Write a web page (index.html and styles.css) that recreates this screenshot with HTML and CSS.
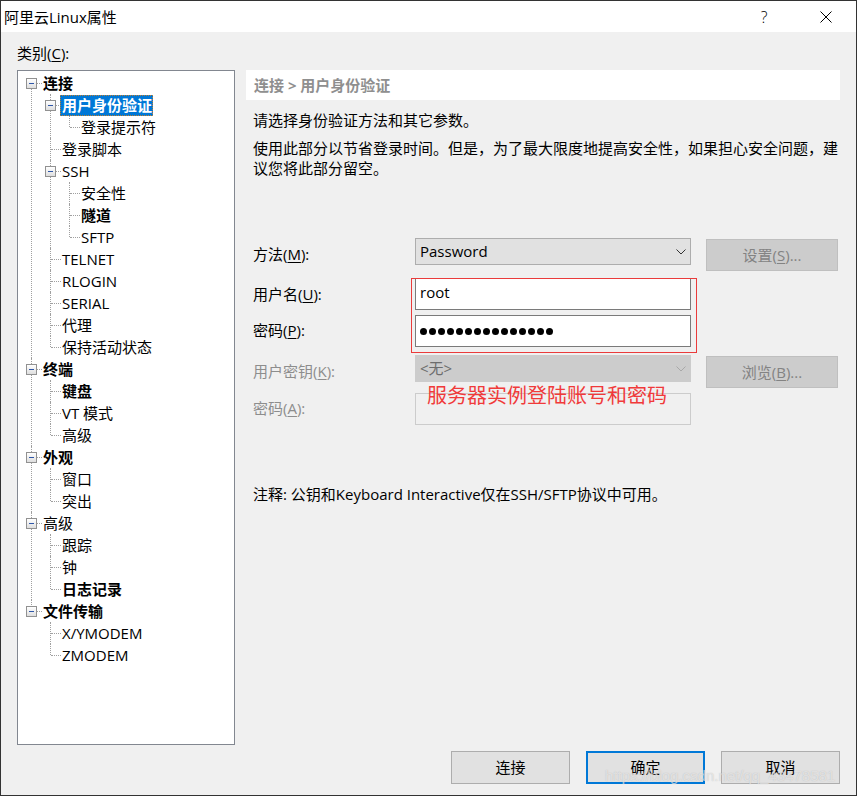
FILE: index.html
```html
<!DOCTYPE html>
<html lang="zh-CN">
<head>
    <meta charset="UTF-8">
    <title>阿里云Linux属性</title>
    <link rel="stylesheet" href="styles.css">
</head>
<body>
<div class="window">
    <div class="titlebar">
        <span class="title">阿里云Linux属性</span>
        <span class="help">?</span>
        <span class="close">
            <svg width="12" height="12" viewBox="0 0 12 12"><path d="M0.5 0.5 L11.5 11.5 M11.5 0.5 L0.5 11.5" stroke="#000" stroke-width="1" fill="none"/></svg>
        </span>
    </div>
    <div class="content">
        <div class="category">类别(<u>C</u>):</div>
        <div class="main">
            <div class="tree-panel">
                <ul class="tree">
                    <li>
                        <div class="row bold"><span class="box"></span>连接</div>
                        <ul>
                            <li>
                                <div class="row bold"><span class="box"></span><span class="sel">用户身份验证</span></div>
                                <ul>
                                    <li><div class="row">登录提示符</div></li>
                                </ul>
                            </li>
                            <li><div class="row">登录脚本</div></li>
                            <li>
                                <div class="row"><span class="box"></span>SSH</div>
                                <ul>
                                    <li><div class="row">安全性</div></li>
                                    <li><div class="row bold">隧道</div></li>
                                    <li><div class="row">SFTP</div></li>
                                </ul>
                            </li>
                            <li><div class="row">TELNET</div></li>
                            <li><div class="row">RLOGIN</div></li>
                            <li><div class="row">SERIAL</div></li>
                            <li><div class="row">代理</div></li>
                            <li><div class="row">保持活动状态</div></li>
                        </ul>
                    </li>
                    <li>
                        <div class="row bold"><span class="box"></span>终端</div>
                        <ul>
                            <li><div class="row bold">键盘</div></li>
                            <li><div class="row">VT 模式</div></li>
                            <li><div class="row">高级</div></li>
                        </ul>
                    </li>
                    <li>
                        <div class="row bold"><span class="box"></span>外观</div>
                        <ul>
                            <li><div class="row">窗口</div></li>
                            <li><div class="row">突出</div></li>
                        </ul>
                    </li>
                    <li>
                        <div class="row"><span class="box"></span>高级</div>
                        <ul>
                            <li><div class="row">跟踪</div></li>
                            <li><div class="row">钟</div></li>
                            <li><div class="row bold">日志记录</div></li>
                        </ul>
                    </li>
                    <li>
                        <div class="row bold"><span class="box"></span>文件传输</div>
                        <ul>
                            <li><div class="row">X/YMODEM</div></li>
                            <li><div class="row">ZMODEM</div></li>
                        </ul>
                    </li>
                </ul>
            </div>

            <div class="panel">
                <div class="crumb">连接 &gt; 用户身份验证</div>
                <p class="intro">请选择身份验证方法和其它参数。</p>
                <p class="desc">使用此部分以节省登录时间。但是，为了最大限度地提高安全性，如果担心安全问题，建议您将此部分留空。</p>

                <div class="form">
                    <div class="lbl">方法(<u>M</u>):</div>
                    <div class="select">Password
                        <svg class="chev" width="10" height="6" viewBox="0 0 10 6"><path d="M0.5 0.5 L5 5 L9.5 0.5" stroke="#333" fill="none"/></svg>
                    </div>
                    <div class="btn disabled">设置(<u>S</u>)...</div>

                    <div class="lbl">用户名(<u>U</u>):</div>
                    <div class="input">root</div>
                    <div></div>

                    <div class="lbl">密码(<u>P</u>):</div>
                    <div class="input second"><span class="dots"><i></i><i></i><i></i><i></i><i></i><i></i><i></i><i></i><i></i><i></i><i></i><i></i><i></i><i></i><i></i></span></div>
                    <div></div>

                    <div class="lbl off">用户密钥(<u>K</u>):</div>
                    <div class="select disabled">&lt;无&gt;
                        <svg class="chev" width="10" height="6" viewBox="0 0 10 6"><path d="M0.5 0.5 L5 5 L9.5 0.5" stroke="#a8a8a8" fill="none"/></svg>
                    </div>
                    <div class="btn disabled">浏览(<u>B</u>)...</div>

                    <div class="lbl off">密码(<u>A</u>):</div>
                    <div class="input blank"></div>
                    <div></div>

                    <div class="mark"></div>
                    <div class="note-red">服务器实例登陆账号和密码</div>
                </div>

                <p class="note">注释: 公钥和Keyboard Interactive仅在SSH/SFTP协议中可用。</p>
            </div>
        </div>

        <div class="buttons">
            <div class="btn">连接</div>
            <div class="btn default">确定</div>
            <div class="btn">取消</div>
        </div>
    </div>
    <div class="watermark">https://blog.csdn.net/qq_43478581</div>
</div>
</body>
</html>
```

FILE: styles.css
```css
html, body {
    margin: 0;
    padding: 0;
}

body {
    font-family: "Segoe UI", "Open Sans", "Noto Sans CJK SC", sans-serif;
    font-size: 15px;
    color: #000;
}

u {
    text-decoration: underline;
    text-underline-offset: 2px;
}

.window {
    position: relative;
    width: 857px;
    height: 796px;
    box-sizing: border-box;
    border: 1px solid #333;
    background: #f0f0f0;
    display: flex;
    flex-direction: column;
}

.titlebar {
    height: 31px;
    background: #fff;
    display: flex;
    align-items: center;
    line-height: 20px;
}

.title {
    margin-left: 3px;
    flex: 1;
}

.help {
    width: 20px;
    text-align: center;
    font-weight: 300;
    font-size: 16px;
}

.close {
    display: flex;
    margin-left: 46px;
    margin-right: 24px;
}

.content {
    flex: 1;
    display: flex;
    flex-direction: column;
    padding: 0 16px;
}

.category {
    margin-top: 11px;
    line-height: 20px;
}

.main {
    margin-top: 7px;
    display: flex;
    align-items: flex-start;
}

/* tree */

.tree-panel {
    flex: none;
    width: 218px;
    height: 675px;
    box-sizing: border-box;
    border: 1px solid #828790;
    background: #fff;
    padding-top: 1px;
}

.tree,
.tree ul {
    list-style: none;
    margin: 0;
    padding: 0;
}

.tree ul {
    margin-left: 19px;
}

.tree li {
    position: relative;

    &::before {
        content: '';
        position: absolute;
        left: 13px;
        top: 0;
        bottom: 0;
        border-left: 1px dotted #a0a0a0;
    }

    &::after {
        content: '';
        position: absolute;
        left: 14px;
        top: 11px;
        width: 10px;
        border-top: 1px dotted #a0a0a0;
    }

    &:last-child::before {
        bottom: auto;
        height: 11px;
    }
}

.tree > li:first-child::before {
    top: 11px;
}

.row {
    position: relative;
    z-index: 1;
    height: 22px;
    line-height: 22px;
    padding-left: 25px;
    white-space: nowrap;
}

.bold {
    font-weight: bold;
}

.box {
    position: absolute;
    left: 8px;
    top: 6px;
    width: 11px;
    height: 11px;
    box-sizing: border-box;
    border: 1px solid #919191;
    background: linear-gradient(#fff, #dedede);

    &::after {
        content: '';
        position: absolute;
        left: 2px;
        top: 4px;
        width: 5px;
        height: 1px;
        background: #2f57a8;
    }
}

.sel {
    display: inline-block;
    margin-left: -2px;
    padding: 0 1px 0 2px;
    line-height: 21px;
    background: #0078d7;
    color: #fff;
    outline: 1px dotted #c08030;
    outline-offset: -1px;
}

/* right panel */

.panel {
    flex: 1;
    min-width: 0;
    margin-left: 11px;
}

.crumb {
    height: 30px;
    line-height: 30px;
    padding-left: 8px;
    background: #fff;
    color: #8f8f8f;
    font-weight: bold;
}

.intro,
.desc,
.note {
    margin: 0;
    padding-left: 7px;
    line-height: 20px;
}

.intro {
    margin-top: 10px;
}

.desc {
    margin-top: 8px;
}

.form {
    position: relative;
    margin-top: 60px;
    padding-left: 7px;
    display: grid;
    grid-template-columns: 147px 276px 132px;
    grid-template-rows: 40px 36px 41px 37px 34px;
    column-gap: 15px;
    align-items: start;
}

.lbl {
    padding-top: 6px;
    line-height: 20px;

    &.off {
        color: #8d8d8d;
    }
}

.select {
    position: relative;
    height: 27px;
    box-sizing: border-box;
    border: 1px solid #adadad;
    background: #e1e1e1;
    padding-left: 4px;
    line-height: 25px;

    &.disabled {
        background: #cccccc;
        border-color: #cccccc;
        color: #6d6d6d;
    }
}

.chev {
    position: absolute;
    right: 4px;
    top: 10px;
}

.input {
    height: 32px;
    box-sizing: border-box;
    border: 1px solid #7a7a7a;
    background: #fff;
    padding-left: 4px;
    line-height: 26px;

    &.second {
        margin-top: 1px;
        display: flex;
        align-items: center;
    }

    &.blank {
        margin-top: 1px;
        background: #f0f0f0;
        border-color: #cccccc;
    }
}

.dots {
    display: flex;
    gap: 2px;

    & i {
        width: 7px;
        height: 7px;
        border-radius: 50%;
        background: #000;
    }
}

.btn {
    height: 33px;
    box-sizing: border-box;
    border: 1px solid #adadad;
    background: #e1e1e1;
    text-align: center;
    line-height: 31px;

    &.disabled {
        margin-top: 1px;
        height: 32px;
        background: #cccccc;
        border-color: #bfbfbf;
        color: #838383;
    }

    &.default {
        border: 2px solid #0078d7;
        line-height: 29px;
    }
}

/* annotation drawn over the form */
.mark {
    position: absolute;
    left: 165px;
    top: 40px;
    width: 286px;
    height: 75px;
    border: 1px solid #ea3b3b;
    box-sizing: border-box;
}

.note-red {
    position: absolute;
    left: 181px;
    top: 146px;
    color: #f03a3a;
    font-size: 20px;
    line-height: 24px;
}

.note {
    margin-top: 58px;
}

.buttons {
    margin-top: 6px;
    display: flex;
    justify-content: flex-end;
    gap: 16px;

    & .btn {
        width: 119px;
    }
}

.watermark {
    position: absolute;
    left: 604px;
    top: 766px;
    font-family: "Liberation Sans", sans-serif;
    font-size: 15px;
    color: rgba(255, 255, 255, 0.55);
    text-shadow: 0 0 1px rgba(150, 150, 150, 0.6);
    white-space: nowrap;
}
```
